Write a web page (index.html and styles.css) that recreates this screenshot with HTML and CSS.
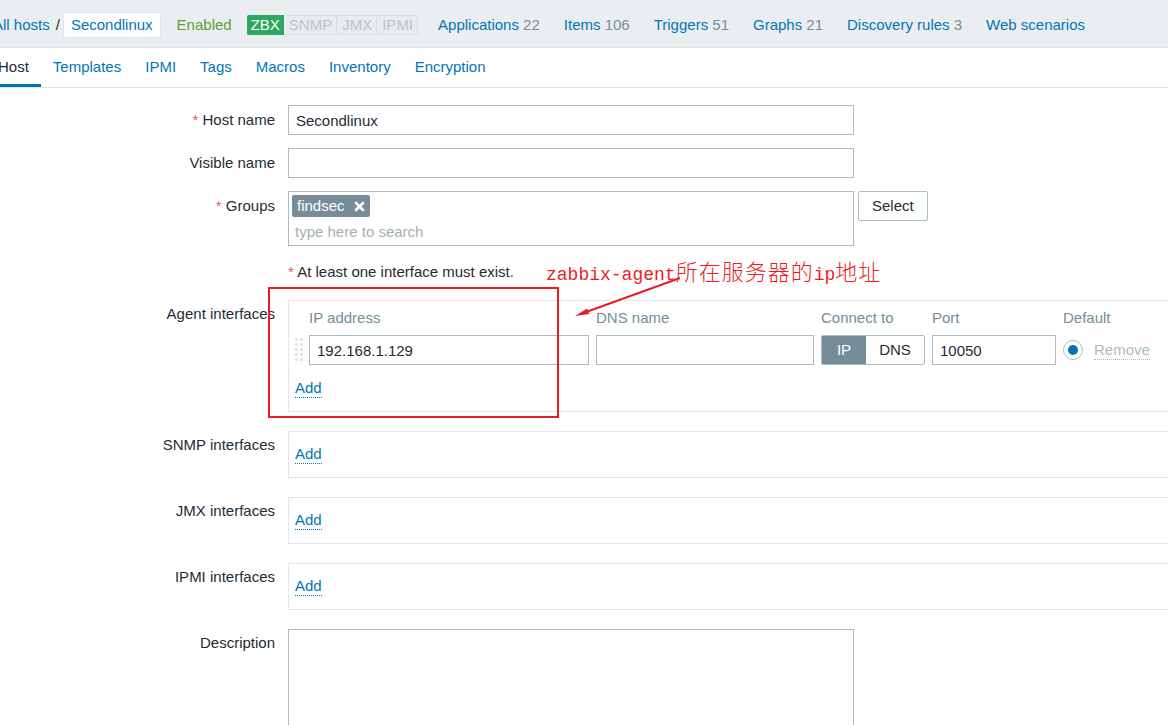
FILE: index.html
```html
<!DOCTYPE html>
<html lang="en">
<head>
  <meta charset="UTF-8">
  <meta name="viewport" content="width=device-width, initial-scale=1.0">
  <title>Hosts: Secondlinux</title>
  <link rel="stylesheet" href="styles.css">
</head>
<body>
  <div class="page">
    <div class="host-nav">
      <a class="crumb">All hosts</a>
      <span class="sep">/</span>
      <span class="crumb-current">Secondlinux</span>
      <span class="status-enabled">Enabled</span>
      <span class="avail">
        <span class="av on">ZBX</span><span class="av">SNMP</span><span class="av">JMX</span><span class="av">IPMI</span>
      </span>
      <a class="nav-link">Applications <span class="count">22</span></a>
      <a class="nav-link">Items <span class="count">106</span></a>
      <a class="nav-link">Triggers <span class="count">51</span></a>
      <a class="nav-link">Graphs <span class="count">21</span></a>
      <a class="nav-link">Discovery rules <span class="count">3</span></a>
      <a class="nav-link">Web scenarios</a>
    </div>

    <ul class="tabs">
      <li class="active">Host</li>
      <li>Templates</li>
      <li>IPMI</li>
      <li>Tags</li>
      <li>Macros</li>
      <li>Inventory</li>
      <li>Encryption</li>
    </ul>

    <form class="host-form">
      <div class="row">
        <label class="lbl"><span class="req">*</span> Host name</label>
        <div class="field"><input class="text" type="text" value="Secondlinux"></div>
      </div>
      <div class="row">
        <label class="lbl">Visible name</label>
        <div class="field"><input class="text" type="text"></div>
      </div>
      <div class="row">
        <label class="lbl"><span class="req">*</span> Groups</label>
        <div class="field field-inline">
          <div class="multiselect">
            <span class="tag">findsec
              <svg class="tag-x" width="11" height="11" viewBox="0 0 11 11"><path d="M2 2 L9 9 M9 2 L2 9" stroke="#fff" stroke-width="2.6" stroke-linecap="round"/></svg>
            </span>
            <div class="ms-search">type here to search</div>
          </div>
          <button class="btn" type="button">Select</button>
        </div>
      </div>

      <div class="row row-msg">
        <div class="lbl"></div>
        <div class="field msg"><span class="req">*</span> At least one interface must exist.</div>
      </div>

      <div class="row row-iface">
        <label class="lbl">Agent interfaces</label>
        <div class="field">
          <div class="iface">
            <div class="iface-grid">
              <span></span>
              <span class="th">IP address</span>
              <span class="th">DNS name</span>
              <span class="th">Connect to</span>
              <span class="th">Port</span>
              <span class="th">Default</span>

              <svg class="drag" width="8" height="24" viewBox="0 0 8 24">
                <g fill="#e3e7ea">
                  <rect x="0" y="0" width="3" height="3"/><rect x="5" y="0" width="3" height="3"/>
                  <rect x="0" y="5" width="3" height="3"/><rect x="5" y="5" width="3" height="3"/>
                  <rect x="0" y="10" width="3" height="3"/><rect x="5" y="10" width="3" height="3"/>
                  <rect x="0" y="15" width="3" height="3"/><rect x="5" y="15" width="3" height="3"/>
                  <rect x="0" y="20" width="3" height="3"/><rect x="5" y="20" width="3" height="3"/>
                </g>
              </svg>
              <input class="text" type="text" value="192.168.1.129">
              <input class="text" type="text">
              <div class="seg"><span class="seg-on">IP</span><span>DNS</span></div>
              <input class="text" type="text" value="10050">
              <div class="def">
                <span class="radio"><span class="radio-dot"></span></span>
                <a class="link-off">Remove</a>
              </div>
            </div>
            <a class="add">Add</a>
          </div>
        </div>
      </div>

      <div class="row row-iface">
        <label class="lbl">SNMP interfaces</label>
        <div class="field"><div class="iface iface-empty"><a class="add">Add</a></div></div>
      </div>
      <div class="row row-iface">
        <label class="lbl">JMX interfaces</label>
        <div class="field"><div class="iface iface-empty"><a class="add">Add</a></div></div>
      </div>
      <div class="row row-iface">
        <label class="lbl">IPMI interfaces</label>
        <div class="field"><div class="iface iface-empty"><a class="add">Add</a></div></div>
      </div>

      <div class="row">
        <label class="lbl lbl-top">Description</label>
        <div class="field"><textarea class="text desc"></textarea></div>
      </div>
    </form>

    <!-- hand-drawn note over the agent interface -->
    <div class="note">zabbix-agent<span class="cjk">所在服务器的</span>ip<span class="cjk">地址</span></div>
    <svg class="note-arrow" width="120" height="50" viewBox="0 0 120 50">
      <line x1="110" y1="6" x2="12" y2="41.5" stroke="#ec1c24" stroke-width="2"/>
      <polygon points="5,44 19.2,42 17.2,36.4" fill="#ec1c24"/>
    </svg>
    <div class="note-frame"></div>
  </div>
</body>
</html>
```

FILE: styles.css
```css
html, body {
  overflow: hidden;
}
body {
  margin: 0;
  font-family: "Liberation Sans", Arial, sans-serif;
  font-size: 15px;
  line-height: 18px;
  color: #1f2c33;
  background: #fff;
}
a {
  color: #0275b8;
  cursor: pointer;
}
.page {
  position: relative;
  width: 1168px;
  height: 725px;
  overflow: hidden;
}

/* host navigation bar */
.host-nav {
  box-sizing: border-box;
  display: flex;
  align-items: center;
  height: 48px;
  padding-top: 3px;
  background-color: #ebeef0;
  border-bottom: 1px solid #dfe4e7;
  white-space: nowrap;
}
.crumb {
  margin-left: -7px;
}
.sep {
  margin: 0 3px 0 6px;
  color: #1f2c33;
}
.crumb-current {
  height: 24px;
  line-height: 24px;
  padding: 0 7px;
  background: #fff;
  border: 1px solid #dfe4e7;
  border-radius: 2px;
  color: #0275b8;
}
.status-enabled {
  margin-left: 16px;
  color: #5f9e3a;
}
.avail {
  display: flex;
  margin-left: 15px;
}
.av {
  padding: 0 4px 0 5px;
  border: 1px solid #d9dee1;
  border-left: none;
  color: #bcc5ca;
  background: #e8ecee;
}
.av.on {
  padding: 0 3px 0 4px;
  color: #fff;
  background: #2ea85e;
  border-color: #2ea85e;
  border-radius: 2px 0 0 2px;
}
.av:last-child {
  border-radius: 0 2px 2px 0;
}
.nav-link {
  margin-left: 24px;
}
.avail + .nav-link {
  margin-left: 20px;
}
.count {
  color: #768d99;
}

/* tabs */
.tabs {
  display: flex;
  list-style: none;
  margin: 0 0 0 -14px;
  padding: 0;
  border-bottom: 1px solid #dfe4e7;
}
.tabs li {
  padding: 2px 12px 0;
  height: 34px;
  line-height: 34px;
  border-bottom: 3px solid transparent;
  color: #0275b8;
}
.tabs li.active {
  color: #1f2c33;
  border-bottom-color: #0275b8;
}

/* form */
.host-form {
  padding-top: 17px;
}
.row {
  display: flex;
  margin-bottom: 13px;
}
.lbl {
  flex: 0 0 275px;
  padding-top: 6px;
  margin-right: 13px;
  text-align: right;
  white-space: nowrap;
}
.lbl-top {
  padding-top: 5px;
}
.req {
  color: #e45959;
}
.field {
  flex: 1;
}
.field-inline {
  display: flex;
  align-items: flex-start;
  gap: 4px;
}
.text {
  box-sizing: border-box;
  width: 566px;
  height: 30px;
  padding: 0 7px;
  border: 1px solid #acbbc2;
  border-radius: 0;
  font: inherit;
  color: #1f2c33;
  background: #fff;
  outline: none;
}
.multiselect {
  box-sizing: border-box;
  width: 566px;
  height: 55px;
  padding: 3px;
  border: 1px solid #acbbc2;
}
.tag {
  display: inline-flex;
  align-items: center;
  gap: 9px;
  height: 22px;
  padding: 0 5px;
  background: #768d99;
  color: #fff;
  border-radius: 2px;
}
.ms-search {
  margin-top: 6px;
  padding-left: 3px;
  color: #a4afb5;
}
.btn {
  height: 30px;
  padding: 0 13px;
  background: #fff;
  border: 1px solid #acbbc2;
  border-radius: 2px;
  font: inherit;
  color: #1f2c33;
}
.row-msg {
  margin-top: 17px;
  margin-bottom: 19px;
}

/* interface blocks */
.row-iface {
  margin-bottom: 19px;
}
.row-iface .lbl {
  padding-top: 5px;
}
.iface {
  box-sizing: border-box;
  width: 900px;
  padding: 8px 6px 13px;
  border: 1px solid #e3e7ea;
}
.iface-empty {
  padding: 13px 6px 13px;
}
.iface-grid {
  display: grid;
  grid-template-columns: 7px 280px 218px 104px 124px auto;
  column-gap: 7px;
  row-gap: 8px;
  align-items: center;
  margin-bottom: 14px;
}
.th {
  color: #768d99;
}
.iface-grid .text {
  width: 100%;
}
.drag {
  display: block;
}
.seg {
  display: flex;
  box-sizing: border-box;
  height: 30px;
  border: 1px solid #acbbc2;
  border-radius: 2px;
  overflow: hidden;
}
.seg span {
  flex: 1;
  line-height: 28px;
  text-align: center;
}
.seg .seg-on {
  flex: 0 0 44px;
  background: #768d99;
  color: #fff;
}
.def {
  display: flex;
  align-items: center;
  gap: 11px;
}
.radio {
  box-sizing: border-box;
  display: flex;
  align-items: center;
  justify-content: center;
  width: 20px;
  height: 20px;
  border: 1px solid #acbbc2;
  border-radius: 50%;
}
.radio-dot {
  width: 10px;
  height: 10px;
  border-radius: 50%;
  background: #0275b8;
}
.link-off {
  color: #acbbc2;
  border-bottom: 1px dotted #acbbc2;
}
.add {
  display: inline-block;
  vertical-align: top;
  border-bottom: 1px dotted #0275b8;
}
.desc {
  display: block;
  height: 120px;
  resize: none;
}

/* red annotation */
.note {
  position: absolute;
  left: 546px;
  top: 258px;
  font-family: "Liberation Mono", "Noto Sans CJK SC", monospace;
  font-size: 18px;
  line-height: 24px;
  color: #ec1c24;
  white-space: nowrap;
}
.note .cjk {
  font-family: "Noto Sans CJK SC", sans-serif;
  font-size: 22px;
  font-weight: 300;
  letter-spacing: 1px;
}
.note-arrow {
  position: absolute;
  left: 570px;
  top: 272px;
}
.note-frame {
  position: absolute;
  left: 268px;
  top: 287px;
  width: 291px;
  height: 131px;
  box-sizing: border-box;
  border: 2px solid #ec1c24;
}
```
